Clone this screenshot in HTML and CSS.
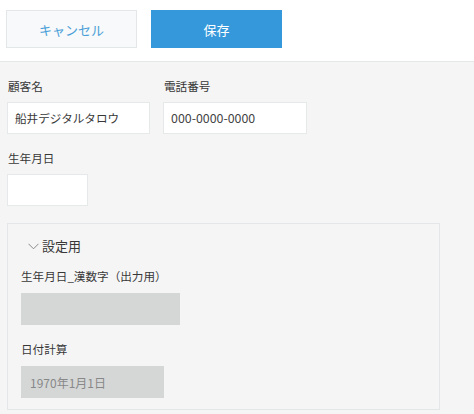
FILE: index.html
```html
<!DOCTYPE html>
<html lang="ja">
<head>
<meta charset="utf-8">
<title>フォーム</title>
<link rel="stylesheet" href="styles.css">
</head>
<body>
<header class="toolbar">
  <button class="btn btn-cancel" type="button">キャンセル</button>
  <button class="btn btn-save" type="button">保存</button>
</header>
<main class="form">
  <div class="row">
    <div class="field">
      <div class="label">顧客名</div>
      <div class="input input-name">船井デジタルタロウ</div>
    </div>
    <div class="field">
      <div class="label">電話番号</div>
      <div class="input input-phone">000-0000-0000</div>
    </div>
  </div>
  <div class="row">
    <div class="field">
      <div class="label">生年月日</div>
      <div class="input input-date"></div>
    </div>
  </div>
  <section class="group">
    <div class="group-title">
      <svg class="chevron" width="11" height="7" viewBox="0 0 11 7"><polyline points="0.5,0.8 5.5,5.8 10.5,0.8" fill="none" stroke="#8a8a8a" stroke-width="1"/></svg>
      <span>設定用</span>
    </div>
    <div class="field">
      <div class="label">生年月日_漢数字（出力用）</div>
      <div class="input disabled disabled-wide"></div>
    </div>
    <div class="field field-last">
      <div class="label">日付計算</div>
      <div class="input disabled disabled-narrow">1970年1月1日</div>
    </div>
  </section>
</main>
</body>
</html>
```
FILE: styles.css
```css
html, body {
  margin: 0;
  padding: 0;
}
body {
  font-family: "Noto Sans CJK JP", "Noto Sans", sans-serif;
  color: #383838;
  background: #f5f5f5;
  min-height: 414px;
}
.toolbar {
  box-sizing: border-box;
  height: 62px;
  background: #fff;
  border-bottom: 1px solid #e3e7e8;
  padding: 10px 0 0 6px;
  display: flex;
  gap: 14px;
  align-items: flex-start;
}
.btn {
  box-sizing: border-box;
  width: 131px;
  height: 38px;
  font-family: inherit;
  font-size: 13px;
  display: flex;
  align-items: center;
  justify-content: center;
  padding: 0;
  margin: 0;
}
.btn-cancel {
  background: #f7f9fa;
  border: 1px solid #e3e7e8;
  color: #4a9fd8;
}
.btn-save {
  background: #3498db;
  border: 1px solid #3498db;
  color: #fff;
}
.form {
  padding: 16px 0 0 7px;
  display: flex;
  flex-direction: column;
  gap: 16px;
}
.row {
  display: flex;
  gap: 13px;
}
.label {
  font-size: 11.6px;
  line-height: 16px;
  margin-left: 1px;
  margin-bottom: 8px;
  white-space: nowrap;
}
.input {
  box-sizing: border-box;
  height: 32px;
  background: #fff;
  border: 1px solid #e6e9ea;
  font-size: 11.6px;
  padding: 0 7px;
  display: flex;
  align-items: center;
  white-space: nowrap;
}
.input-name { width: 143px; }
.input-phone { width: 144px; color: #444; font-size: 12.4px; }
.input-date { width: 81px; }
.group {
  box-sizing: border-box;
  width: 433px;
  margin-top: 1px;
  border: 1px solid #e3e7e8;
  padding: 14px 13px 11px 13px;
}
.group-title {
  display: flex;
  align-items: center;
  gap: 3px;
  padding-left: 7px;
  font-size: 13px;
  line-height: 16px;
  margin-bottom: 14px;
}
.chevron {
  display: block;
}
.group .label {
  margin-left: 0;
  margin-bottom: 9px;
}
.field-last {
  margin-top: 16px;
}
.disabled {
  background: #d5d7d7;
  border-color: #d5d7d7;
  color: #888;
  padding-left: 8px;
  font-size: 12px;
}
.disabled-wide { width: 159px; }
.disabled-narrow { width: 143px; }
```
